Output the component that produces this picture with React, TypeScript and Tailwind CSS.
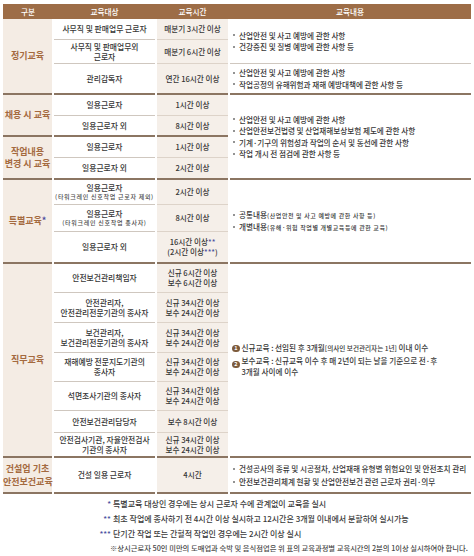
import React from "react";

const F = "font-['Noto_Sans_CJK_KR','Noto_Sans',sans-serif]";
const thick = "border-b-2 border-[#8b7562]";
const thinT = "border-b border-[#cfc7bf]";
const thinTm = "border-b border-[#ddd3c9]";
const cat =
  "bg-[#f4ece4] text-[#a46a3f] font-bold text-[9px] leading-[12px] text-center align-middle whitespace-nowrap";
const tgt =
  "text-center align-middle text-[7.8px] leading-[10px] text-[#363636] font-medium whitespace-nowrap";
const tm =
  "bg-[#f5efe9] text-center align-middle text-[7.6px] leading-[10px] text-[#363636] font-medium whitespace-nowrap";
const cnt =
  "align-middle text-left text-[7.6px] leading-[11.5px] text-[#363636] font-medium pl-[2px]";

function B({ children }: { children: React.ReactNode }) {
  return (
    <div className="flex items-center">
      <span className="inline-block w-[2px] h-[2px] rounded-full bg-[#6f6f6f] ml-[1px] mr-[4px] shrink-0" />
      <span className="whitespace-nowrap">{children}</span>
    </div>
  );
}

function Sub({ children }: { children: React.ReactNode }) {
  return (
    <div className="text-[6px] tracking-[0.7px] leading-[8px] text-[#4a4a4a]">{children}</div>
  );
}

function Star({ children }: { children: React.ReactNode }) {
  return <span className="text-[#4a4f9e]">{children}</span>;
}

function Num({ n }: { n: string }) {
  return (
    <span className="inline-flex w-[7.5px] h-[7.5px] rounded-full bg-[#7d5b3c] text-white text-[5.5px] font-bold leading-none items-center justify-center shrink-0 mr-[2px]">
      {n}
    </span>
  );
}

export default function App() {
  return (
    <div className={`w-[474px] h-[556px] bg-white overflow-hidden ${F}`}>
      <div className="pt-[4px]">
        <div className="ml-[3px] w-[468px] h-[15px] bg-[#9d6d47] flex text-white text-[7.6px] font-medium items-center">
          <div className="w-[50px] text-center">구분</div>
          <div className="w-[103px] text-center">교육대상</div>
          <div className="w-[73px] text-center">교육시간</div>
          <div className="flex-1 text-center">교육내용</div>
        </div>
        <table className="ml-[1px] w-[472px] table-fixed border-separate [border-spacing:2px_0]">
          <colgroup>
            <col className="w-[49px]" />
            <col className="w-[101px]" />
            <col className="w-[71px]" />
            <col className="w-[241px]" />
          </colgroup>
          <tbody>
            <tr className="h-[21px]">
              <td rowSpan={3} className={`${cat} ${thick}`}>정기교육</td>
              <td className={`${tgt} ${thinT}`}>사무직 및 판매업무 근로자</td>
              <td className={`${tm} ${thinTm}`}>매분기 3시간 이상</td>
              <td rowSpan={2} className={`${cnt} ${thinT}`}>
                <B>산업안전 및 사고 예방에 관한 사항</B>
                <B>건강증진 및 질병 예방에 관한 사항 등</B>
              </td>
            </tr>
            <tr className="h-[24px]">
              <td className={`${tgt} ${thinT}`}>
                사무직 및 판매업무외
                <br />
                근로자
              </td>
              <td className={`${tm} ${thinTm}`}>매분기 6시간 이상</td>
            </tr>
            <tr className="h-[31px]">
              <td className={`${tgt} ${thick}`}>관리감독자</td>
              <td className={`${tm} ${thick}`}>연간 16시간 이상</td>
              <td className={`${cnt} ${thick}`}>
                <B>산업안전 및 사고 예방에 관한 사항</B>
                <B>작업공정의 유해위험과 재해 예방대책에 관한 사항 등</B>
              </td>
            </tr>

            <tr className="h-[21px]">
              <td rowSpan={2} className={`${cat} ${thick}`}>채용 시 교육</td>
              <td className={`${tgt} ${thinT}`}>일용근로자</td>
              <td className={`${tm} ${thinTm}`}>1시간 이상</td>
              <td rowSpan={4} className={`${cnt} ${thick}`}>
                <B>산업안전 및 사고 예방에 관한 사항</B>
                <B>산업안전보건법령 및 산업재해보상보험 제도에 관한 사항</B>
                <B>기계·기구의 위험성과 작업의 순서 및 동선에 관한 사항</B>
                <B>작업 개시 전 점검에 관한 사항 등</B>
              </td>
            </tr>
            <tr className="h-[21px]">
              <td className={`${tgt} ${thick}`}>일용근로자 외</td>
              <td className={`${tm} ${thick}`}>8시간 이상</td>
            </tr>
            <tr className="h-[21px]">
              <td rowSpan={2} className={`${cat} ${thick}`}>
                작업내용
                <br />
                변경 시 교육
              </td>
              <td className={`${tgt} ${thinT}`}>일용근로자</td>
              <td className={`${tm} ${thinTm}`}>1시간 이상</td>
            </tr>
            <tr className="h-[22px]">
              <td className={`${tgt} ${thick}`}>일용근로자 외</td>
              <td className={`${tm} ${thick}`}>2시간 이상</td>
            </tr>

            <tr className="h-[25px]">
              <td rowSpan={3} className={`${cat} ${thick}`}>
                특별교육<Star>*</Star>
              </td>
              <td className={`${tgt} ${thinT}`}>
                일용근로자
                <Sub>(타워크레인 신호작업 근로자 제외)</Sub>
              </td>
              <td className={`${tm} ${thinTm}`}>2시간 이상</td>
              <td rowSpan={3} className={`${cnt} ${thick}`}>
                <B>
                  공통내용
                  <span className="text-[6px] tracking-[0.6px]">(산업안전 및 사고 예방에 관한 사항 등)</span>
                </B>
                <B>
                  개별내용
                  <span className="text-[6px] tracking-[0.6px]">(유해·위험 작업별 개별교육등에 관한 교육)</span>
                </B>
              </td>
            </tr>
            <tr className="h-[27px]">
              <td className={`${tgt} ${thinT}`}>
                일용근로자
                <Sub>(타워크레인 신호작업 종사자)</Sub>
              </td>
              <td className={`${tm} ${thinTm}`}>8시간 이상</td>
            </tr>
            <tr className="h-[32px]">
              <td className={`${tgt} ${thick}`}>일용근로자 외</td>
              <td className={`${tm} ${thick}`}>
                16시간 이상<Star>**</Star>
                <br />
                (2시간 이상<Star>***</Star>)
              </td>
            </tr>

            <tr className="h-[29px]">
              <td rowSpan={7} className={`${cat} ${thick}`}>직무교육</td>
              <td className={`${tgt} ${thinT}`}>안전보건관리책임자</td>
              <td className={`${tm} ${thinTm}`}>
                신규 6시간 이상
                <br />
                보수 6시간 이상
              </td>
              <td rowSpan={7} className={`${cnt} ${thick}`}>
                <div className="flex items-center">
                  <Num n="1" />
                  <span className="whitespace-nowrap">
                    신규교육 : 선임된 후 3개월
                    <span className="text-[6.6px]">[의사인 보건관리자는 1년]</span> 이내 이수
                  </span>
                </div>
                <div className="flex items-start">
                  <span className="mt-[2px]">
                    <Num n="2" />
                  </span>
                  <span className="whitespace-nowrap">
                    보수교육 : 신규교육 이수 후 매 2년이 되는 날을 기준으로 전·후
                    <br />
                    3개월 사이에 이수
                  </span>
                </div>
              </td>
            </tr>
            <tr className="h-[30px]">
              <td className={`${tgt} ${thinT}`}>
                안전관리자,
                <br />
                안전관리전문기관의 종사자
              </td>
              <td className={`${tm} ${thinTm}`}>
                신규 34시간 이상
                <br />
                보수 24시간 이상
              </td>
            </tr>
            <tr className="h-[30px]">
              <td className={`${tgt} ${thinT}`}>
                보건관리자,
                <br />
                보건관리전문기관의 종사자
              </td>
              <td className={`${tm} ${thinTm}`}>
                신규 34시간 이상
                <br />
                보수 24시간 이상
              </td>
            </tr>
            <tr className="h-[29px]">
              <td className={`${tgt} ${thinT}`}>
                재해예방 전문지도기관의
                <br />
                종사자
              </td>
              <td className={`${tm} ${thinTm}`}>
                신규 34시간 이상
                <br />
                보수 24시간 이상
              </td>
            </tr>
            <tr className="h-[29px]">
              <td className={`${tgt} ${thinT}`}>석면조사기관의 종사자</td>
              <td className={`${tm} ${thinTm}`}>
                신규 34시간 이상
                <br />
                보수 24시간 이상
              </td>
            </tr>
            <tr className="h-[22px]">
              <td className={`${tgt} ${thinT}`}>안전보건관리담당자</td>
              <td className={`${tm} ${thinTm}`}>보수 8시간 이상</td>
            </tr>
            <tr className="h-[25px]">
              <td className={`${tgt} ${thick}`}>
                안전검사기관, 자율안전검사
                <br />
                기관의 종사자
              </td>
              <td className={`${tm} ${thick}`}>
                신규 34시간 이상
                <br />
                보수 24시간 이상
              </td>
            </tr>

            <tr className="h-[36px]">
              <td className={`${cat} ${thick} leading-[13px]`}>
                건설업 기초
                <br />
                안전보건교육
              </td>
              <td className={`${tgt} ${thick}`}>건설 일용 근로자</td>
              <td className={`${tm} ${thick}`}>4시간</td>
              <td className={`${cnt} ${thick} leading-[13px]`}>
                <B>건설공사의 종류 및 시공절차, 산업재해 유형별 위험요인 및 안전조치 관리</B>
                <B>안전보건관리체계 현황 및 산업안전보건 관련 근로자 권리·의무</B>
              </td>
            </tr>
          </tbody>
        </table>

        <div className="mt-[2px] pl-[92px] text-[8px] text-[#3a3a3a] font-medium">
          <div className="flex h-[15px] items-center">
            <span className="w-[21px] text-right pr-[2px] text-[#4a4f9e]">*</span>
            <span className="whitespace-nowrap">특별교육 대상인 경우에는 상시 근로자 수에 관계없이 교육을 실시</span>
          </div>
          <div className="flex h-[15px] items-center">
            <span className="w-[21px] text-right pr-[2px] text-[#4a4f9e]">**</span>
            <span className="whitespace-nowrap">
              최초 작업에 종사하기 전 4시간 이상 실시하고 12시간은 3개월 이내에서 분할하여 실시가능
            </span>
          </div>
          <div className="flex h-[15px] items-center">
            <span className="w-[21px] text-right pr-[2px] text-[#4a4f9e]">***</span>
            <span className="whitespace-nowrap">단기간 작업 또는 간헐적 작업인 경우에는 2시간 이상 실시</span>
          </div>
          <div className="flex h-[15px] items-center pl-[18px] text-[7.3px] text-[#4a4a4a] whitespace-nowrap">
            ※상시근로자 50인 미만의 도매업과 숙박 및 음식점업은 위 표의 교육과정별 교육시간의 2분의 1이상 실시하여야 합니다.
          </div>
        </div>
      </div>
    </div>
  );
}
